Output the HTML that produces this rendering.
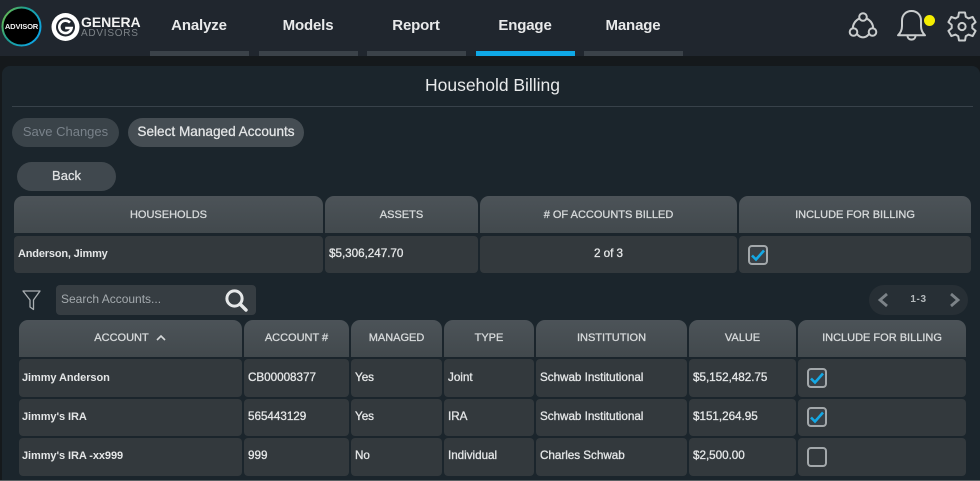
<!DOCTYPE html>
<html><head><meta charset="utf-8"><style>
html,body{margin:0;padding:0;width:980px;height:481px;overflow:hidden;background:#15191c}
body{position:relative;font-family:"Liberation Sans",sans-serif;color:#e4e6e7}
div,span,svg{position:absolute;box-sizing:border-box}
.nav{top:15px;height:20px;line-height:21px;font-size:15px;font-weight:700;color:#e8e9ea;text-align:center;width:100px;letter-spacing:-.15px}
.tab{top:51px;height:5px;width:99px;background:#3b4249}
.btn{border-radius:15px;text-align:center;font-size:13px;font-weight:400;-webkit-text-stroke:.25px}
.h{background:linear-gradient(#4c5358,#42494d);border-radius:9px 9px 0 0;text-align:center;font-size:11px;line-height:37px;height:37px;color:#d6d9da;-webkit-text-stroke:.3px}
.c{background:#33393d;border-radius:4px;font-size:11.7px;line-height:36px;color:#e4e6e7;padding-left:4px;-webkit-text-stroke:.3px;white-space:nowrap;letter-spacing:-.03px}
.b{font-size:11px;font-weight:700;-webkit-text-stroke:0;letter-spacing:-.08px;padding-left:3px}
.cb{width:20px;height:20px;border:2px solid #a3a8ab;border-radius:4px;background:#3a4147}
</style></head><body>
<div style="left:0;top:0;width:980px;height:56px;background:#20262e"></div>

<!-- logos -->
<svg style="left:1px;top:6px" width="41" height="41" viewBox="0 0 41 41">
<defs><linearGradient id="g" x1="0" y1="0" x2="1" y2="0.6"><stop offset="0" stop-color="#7cc242"/><stop offset=".45" stop-color="#1f9e8f"/><stop offset="1" stop-color="#0ea5e0"/></linearGradient></defs>
<circle cx="20.5" cy="20.5" r="19" fill="#000" stroke="url(#g)" stroke-width="2"/></svg>
<div style="left:1px;top:21px;width:41px;text-align:center;font-size:7.6px;line-height:11px;font-weight:700;color:#eee;letter-spacing:-.2px">ADVISOR</div>
<svg style="left:51px;top:13px" width="29" height="29" viewBox="0 0 29 29">
<circle cx="14.5" cy="14" r="14" fill="#fff"/>
<circle cx="14.5" cy="14" r="9.5" fill="#20262e"/>
<path d="M19 9.6A6.2 6.2 0 1 0 20.6 15H14.2" fill="none" stroke="#fff" stroke-width="2.6"/></svg>
<div style="left:81px;top:14px;font-size:14px;line-height:16px;font-weight:700;color:#f2f2f2;letter-spacing:-.05px">GENERA</div>
<div style="left:81px;top:28px;font-size:10px;line-height:11px;color:#7d8388;letter-spacing:.75px">ADVISORS</div>

<!-- nav -->
<div class="nav" style="left:149px">Analyze</div>
<div class="nav" style="left:258px">Models</div>
<div class="nav" style="left:366px">Report</div>
<div class="nav" style="left:475px">Engage</div>
<div class="nav" style="left:583px">Manage</div>
<div class="tab" style="left:150px"></div>
<div class="tab" style="left:259px"></div>
<div class="tab" style="left:367px"></div>
<div class="tab" style="left:476px;background:#0fa8e6"></div>
<div class="tab" style="left:584px"></div>

<!-- header icons -->
<svg style="left:848px;top:11px" width="30" height="30" viewBox="0 0 30 30" fill="none" stroke="#c9cccd" stroke-width="2">
<circle cx="15" cy="6" r="3.8"/><circle cx="5.5" cy="21" r="3.8"/><circle cx="24.5" cy="21" r="3.8"/>
<path d="M11.3 7.5C7.5 9.5 5 13 4.8 17.2M18.7 7.5C22.5 9.5 25 13 25.2 17.2M9 23C12.5 27.5 17.5 27.5 21 23"/></svg>
<svg style="left:896px;top:9px" width="32" height="33" viewBox="0 0 32 33" fill="none" stroke="#c9cccd" stroke-width="2" stroke-linejoin="round">
<path d="M2 26.3C5 23.5 6 21 6 17V11.5C6 6 10 2 15.5 2S25 6 25 11.5V17C25 21 26 23.5 29 26.3Z"/>
<path d="M11.5 26.5C11.5 32 19.5 32 19.5 26.5"/></svg>
<div style="left:924px;top:15px;width:11px;height:11px;border-radius:50%;background:#f5ee00"></div>
<svg style="left:947px;top:11px" width="30" height="31" viewBox="0 0 30 31" fill="none" stroke="#c9cccd" stroke-width="2" stroke-linejoin="round">
<path d="M12 2H18L18.8 6.3L21.5 7.9L25.6 6.4L28.6 11.6L25.3 14.4V17.6L28.6 20.4L25.6 25.6L21.5 24.1L18.8 25.7L18 30H12L11.2 25.7L8.5 24.1L4.4 25.6L1.4 20.4L4.7 17.6V14.4L1.4 11.6L4.4 6.4L8.5 7.9L11.2 6.3Z" transform="translate(0,-.5)"/>
<circle cx="15" cy="15.5" r="3.6"/></svg>

<!-- panel -->
<div style="left:2px;top:66px;width:978px;height:414px;background:#1b252c;border-radius:8px 8px 0 0"></div>
<div style="left:0;top:480px;width:980px;height:1px;background:#5a5f62"></div>
<div style="left:0;top:75px;width:985px;height:20px;line-height:20px;text-align:center;font-size:17.5px;letter-spacing:-.02px;color:#e8eaeb">Household Billing</div>
<div style="left:12px;top:106px;width:961px;height:1px;background:#38424a"></div>

<div class="btn" style="left:12px;top:118px;width:107px;height:29px;line-height:28px;background:#3a4349;color:#79828a;-webkit-text-stroke:0">Save Changes</div>
<div class="btn" style="left:128px;top:118px;width:176px;height:29px;line-height:28px;background:#454d53;color:#e4e6e7;font-size:13.6px">Select Managed Accounts</div>
<div class="btn" style="left:17px;top:162px;width:99px;height:29px;line-height:28px;background:#40484e;color:#dfe1e2">Back</div>

<!-- table 1 -->
<div class="h" style="left:14px;top:196px;width:309px;line-height:38px">HOUSEHOLDS</div>
<div class="h" style="left:325px;top:196px;width:153px;line-height:38px">ASSETS</div>
<div class="h" style="left:480px;top:196px;width:257px;line-height:38px"># OF ACCOUNTS BILLED</div>
<div class="h" style="left:739px;top:196px;width:232px;line-height:38px">INCLUDE FOR BILLING</div>
<div class="c b" style="left:14px;top:236px;width:309px;height:37px;padding-left:4px;letter-spacing:-.18px">Anderson, Jimmy</div>
<div class="c" style="left:325px;top:236px;width:153px;height:37px">$5,306,247.70</div>
<div class="c" style="left:480px;top:236px;width:257px;height:37px;text-align:center;padding:0">2 of 3</div>
<div class="c" style="left:739px;top:236px;width:232px;height:37px"></div>
<div class="cb" style="left:748px;top:245px"></div>
<svg style="left:748px;top:245px" width="20" height="20" viewBox="0 0 20 20" fill="none" stroke="#14a9e6" stroke-width="2.6"><path d="M4 10.5L8 14.5L16 5.5"/></svg>

<!-- tools -->
<svg style="left:21px;top:289px" width="21" height="22" viewBox="0 0 21 22" fill="none" stroke="#a9aeb1" stroke-width="1.3" stroke-linejoin="round"><path d="M2 2H19L12.5 11V20.5L9 18V11Z"/></svg>
<div style="left:56px;top:285px;width:200px;height:30px;background:#363d42;border-radius:4px"></div>
<div style="left:61px;top:285px;height:30px;line-height:29px;font-size:12px;color:#a4aaae">Search Accounts...</div>
<svg style="left:224px;top:288px" width="24" height="24" viewBox="0 0 24 24" fill="none" stroke="#e6e8e9" stroke-width="3"><circle cx="10.5" cy="10.5" r="7.6"/><path d="M16 16L22 22" stroke-width="3.4" stroke-linecap="round"/></svg>
<div style="left:869px;top:285px;width:99px;height:30px;background:#272f35;border-radius:15px"></div>
<svg style="left:876px;top:292px" width="14" height="16" viewBox="0 0 14 16" fill="none" stroke="#7c8388" stroke-width="2.8"><path d="M11 2L4 8L11 14"/></svg>
<svg style="left:948px;top:292px" width="14" height="16" viewBox="0 0 14 16" fill="none" stroke="#7c8388" stroke-width="2.8"><path d="M3 2L10 8L3 14"/></svg>
<div style="left:900px;top:285px;width:37px;height:30px;line-height:29px;text-align:center;font-size:10px;font-weight:700;color:#b5babd;letter-spacing:.6px">1-3</div>

<!-- table 2 -->
<div class="h" style="left:19px;top:320px;width:223px;padding-right:18px">ACCOUNT</div>
<svg style="left:156px;top:334px" width="10" height="7" viewBox="0 0 10 7" fill="none" stroke="#d6d9da" stroke-width="1.6"><path d="M1 6L5 2L9 6"/></svg>
<div class="h" style="left:244px;top:320px;width:105px">ACCOUNT #</div>
<div class="h" style="left:351px;top:320px;width:91px">MANAGED</div>
<div class="h" style="left:444px;top:320px;width:90px">TYPE</div>
<div class="h" style="left:536px;top:320px;width:151px">INSTITUTION</div>
<div class="h" style="left:689px;top:320px;width:107px">VALUE</div>
<div class="h" style="left:798px;top:320px;width:168px">INCLUDE FOR BILLING</div>

<div class="c b" style="left:19px;top:359px;width:223px;height:38px;line-height:38px">Jimmy Anderson</div>
<div class="c" style="left:244px;top:359px;width:105px;height:38px;line-height:37px">CB00008377</div>
<div class="c" style="left:351px;top:359px;width:91px;height:38px;line-height:37px">Yes</div>
<div class="c" style="left:444px;top:359px;width:90px;height:38px;line-height:37px">Joint</div>
<div class="c" style="left:536px;top:359px;width:151px;height:38px;line-height:37px">Schwab Institutional</div>
<div class="c" style="left:689px;top:359px;width:107px;height:38px;line-height:37px">$5,152,482.75</div>
<div class="c" style="left:798px;top:359px;width:168px;height:38px"></div>

<div class="c b" style="left:19px;top:399px;width:223px;height:37px">Jimmy's IRA</div>
<div class="c" style="left:244px;top:399px;width:105px;height:37px">565443129</div>
<div class="c" style="left:351px;top:399px;width:91px;height:37px">Yes</div>
<div class="c" style="left:444px;top:399px;width:90px;height:37px">IRA</div>
<div class="c" style="left:536px;top:399px;width:151px;height:37px">Schwab Institutional</div>
<div class="c" style="left:689px;top:399px;width:107px;height:37px">$151,264.95</div>
<div class="c" style="left:798px;top:399px;width:168px;height:37px"></div>

<div class="c b" style="left:19px;top:438px;width:223px;height:38px">Jimmy's IRA -xx999</div>
<div class="c" style="left:244px;top:438px;width:105px;height:38px">999</div>
<div class="c" style="left:351px;top:438px;width:91px;height:38px">No</div>
<div class="c" style="left:444px;top:438px;width:90px;height:38px">Individual</div>
<div class="c" style="left:536px;top:438px;width:151px;height:38px">Charles Schwab</div>
<div class="c" style="left:689px;top:438px;width:107px;height:38px">$2,500.00</div>
<div class="c" style="left:798px;top:438px;width:168px;height:38px"></div>

<div class="cb" style="left:807px;top:368px"></div>
<svg style="left:807px;top:368px" width="20" height="20" viewBox="0 0 20 20" fill="none" stroke="#14a9e6" stroke-width="2.6"><path d="M4 10.5L8 14.5L16 5.5"/></svg>
<div class="cb" style="left:807px;top:407px"></div>
<svg style="left:807px;top:407px" width="20" height="20" viewBox="0 0 20 20" fill="none" stroke="#14a9e6" stroke-width="2.6"><path d="M4 10.5L8 14.5L16 5.5"/></svg>
<div class="cb" style="left:807px;top:447px;background:#33393d"></div>
</body></html>
